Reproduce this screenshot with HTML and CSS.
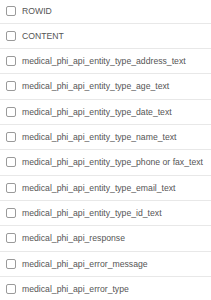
FILE: index.html
```html
<!DOCTYPE html>
<html>
<head>
<meta charset="utf-8">
<link rel="stylesheet" href="styles.css">
</head>
<body>
<ul class="list">
  <li class="row"><span class="box"></span><span class="label">ROWID</span></li>
  <li class="row"><span class="box"></span><span class="label">CONTENT</span></li>
  <li class="row"><span class="box"></span><span class="label">medical_phi_api_entity_type_address_text</span></li>
  <li class="row"><span class="box"></span><span class="label">medical_phi_api_entity_type_age_text</span></li>
  <li class="row"><span class="box"></span><span class="label">medical_phi_api_entity_type_date_text</span></li>
  <li class="row"><span class="box"></span><span class="label">medical_phi_api_entity_type_name_text</span></li>
  <li class="row"><span class="box"></span><span class="label">medical_phi_api_entity_type_phone or fax_text</span></li>
  <li class="row"><span class="box"></span><span class="label">medical_phi_api_entity_type_email_text</span></li>
  <li class="row"><span class="box"></span><span class="label">medical_phi_api_entity_type_id_text</span></li>
  <li class="row"><span class="box"></span><span class="label">medical_phi_api_response</span></li>
  <li class="row"><span class="box"></span><span class="label">medical_phi_api_error_message</span></li>
  <li class="row"><span class="box"></span><span class="label">medical_phi_api_error_type</span></li>
</ul>
</body>
</html>
```

FILE: styles.css
```css
html, body {
  margin: 0;
  padding: 0;
  background: #ffffff;
  overflow: hidden;
}
.list {
  list-style: none;
  margin: -1.67px 0 0 0;
  padding: 0;
  font-family: "Liberation Sans", Arial, sans-serif;
  font-size: 8.67px;
  color: #555555;
}
.row {
  display: flex;
  align-items: center;
  box-sizing: border-box;
  height: 25.33px;
  padding-left: 6px;
  border-bottom: 1px solid #e8e8e8;
}
.box {
  flex: none;
  box-sizing: border-box;
  width: 10px;
  height: 10px;
  border: 1px solid #9a9a9a;
  border-radius: 2px;
  margin-right: 6px;
}
.label {
  white-space: nowrap;
}
```
